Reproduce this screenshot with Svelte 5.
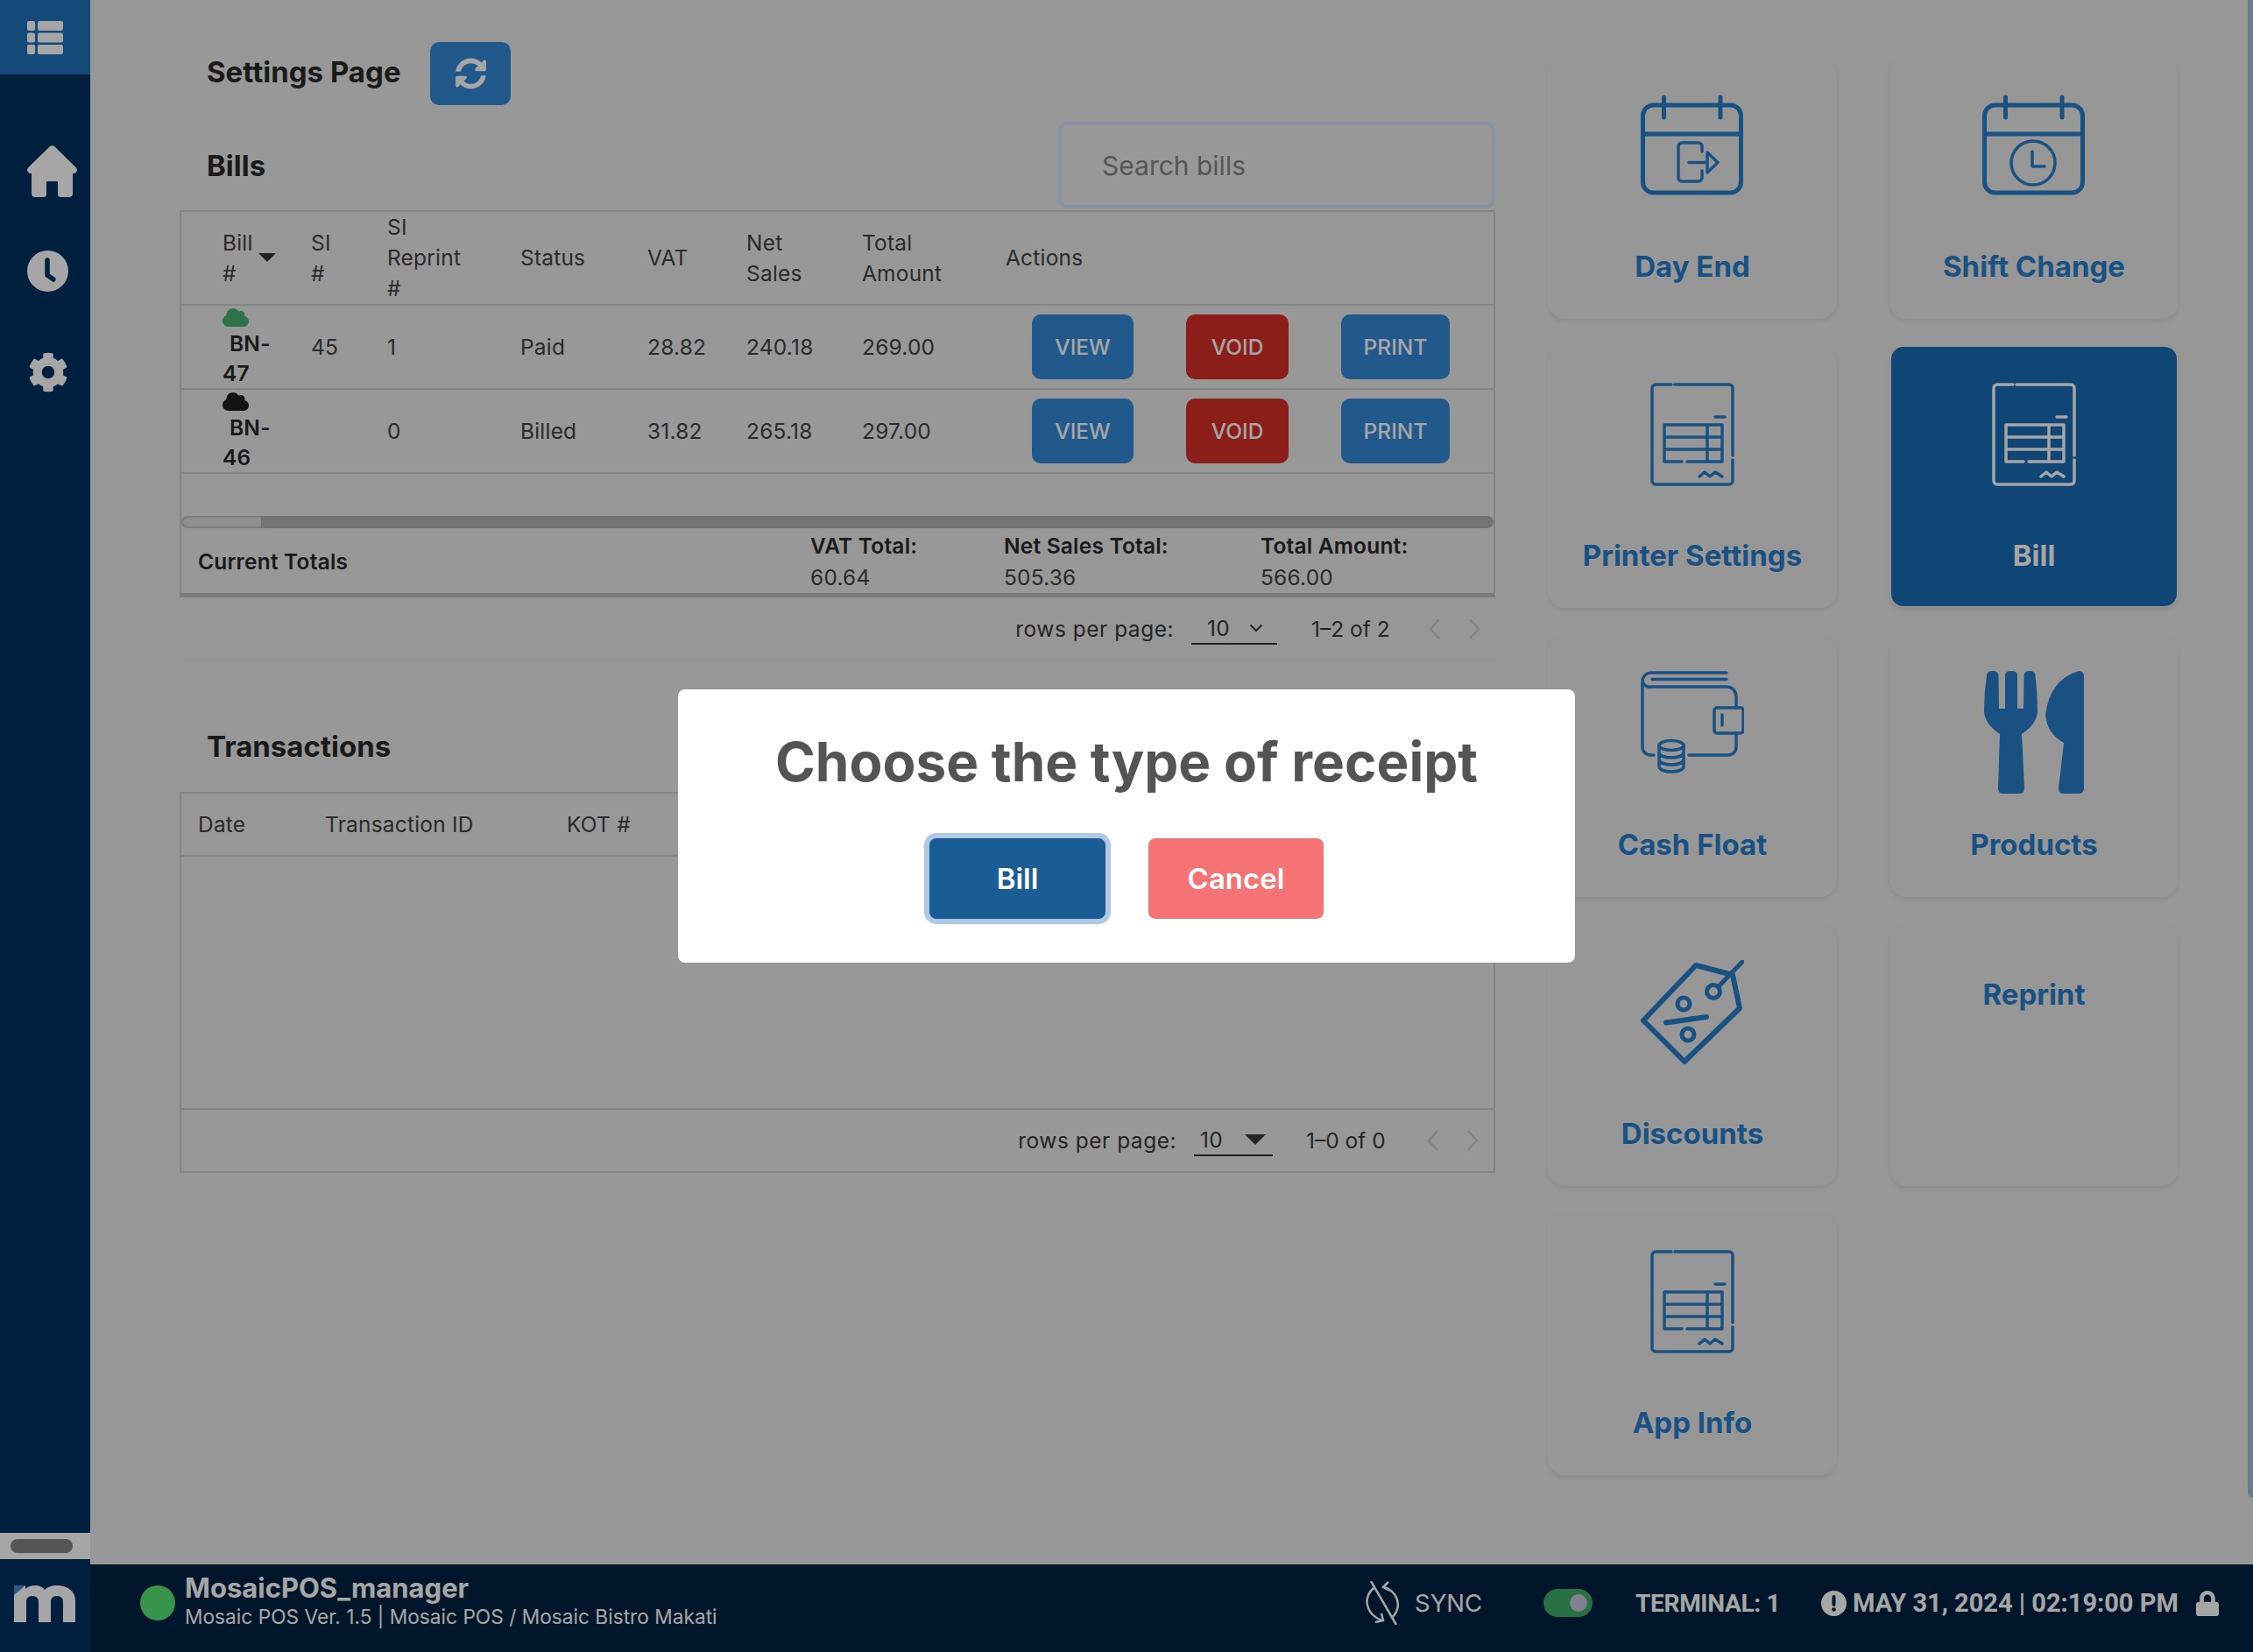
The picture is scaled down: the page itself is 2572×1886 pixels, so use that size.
<script>
  const bills = [
    { no: '47', si: '45', reprint: '1', status: 'Paid', vat: '28.82', net: '240.18', total: '269.00', synced: true },
    { no: '46', si: '', reprint: '0', status: 'Billed', vat: '31.82', net: '265.18', total: '297.00', synced: false }
  ]

  const tiles = [
    { label: 'Day End', icon: 'dayend' },
    { label: 'Shift Change', icon: 'shift' },
    { label: 'Printer Settings', icon: 'receipt' },
    { label: 'Bill', icon: 'receipt', active: true },
    { label: 'Cash Float', icon: 'wallet' },
    { label: 'Products', icon: 'cutlery' },
    { label: 'Discounts', icon: 'tag' },
    { label: 'Reprint' },
    { label: 'App Info', icon: 'receipt' }
  ]
</script>

{#snippet calendar()}
  <rect x="2.5" y="9" width="112" height="100" rx="12" />
  <path d="M2.5 42H114.5M26.500 0V23M91 0V23" />
{/snippet}

{#snippet chevrons()}
  <svg class="chev" viewBox="0 0 14 26"><path d="M12 2 2 13l10 11" /></svg>
  <svg class="chev next" viewBox="0 0 14 26"><path d="M2 2l10 11L2 24" /></svg>
{/snippet}

<div class="app">
  <aside class="sidebar">
    <div class="menu">
      <svg width="41" height="38" viewBox="0 0 41 38" fill="currentColor">
        <rect width="9" height="11" rx="2" /><rect x="12" width="29" height="11" rx="2" />
        <rect y="13.500" width="9" height="11" rx="2" /><rect x="12" y="13.500" width="29" height="11" rx="2" />
        <rect y="27" width="9" height="11" rx="2" /><rect x="12" y="27" width="29" height="11" rx="2" />
      </svg>
    </div>
    <nav class="nav">
      <svg class="home" width="59" height="59" viewBox="0 0 59 59" fill="currentColor">
        <path d="M26.500 1.500a4 4 0 0 1 6 0l24.500 24a4 4 0 0 1-3 6.500H53v23a4 4 0 0 1-4 4h-10a3 3 0 0 1-3-3V42a1 1 0 0 0-1-1H24a1 1 0 0 0-1 1v14a3 3 0 0 1-3 3H10a4 4 0 0 1-4-4V32H5a4 4 0 0 1-3-6.500z" />
      </svg>
      <svg class="clock" width="47" height="47" viewBox="0 0 47 47">
        <circle cx="23.500" cy="23.500" r="23.500" fill="currentColor" />
        <path d="M23 11v17l7 5" fill="none" stroke="#033161" stroke-width="5.500" stroke-linecap="round" stroke-linejoin="round" />
      </svg>
      <svg class="gear" width="46" height="46" viewBox="0 0 512 512" fill="currentColor">
        <path d="M487.4 315.700l-42.600-24.600c4.300-23.200 4.300-47 0-70.200l42.600-24.600c4.900-2.800 7.100-8.600 5.500-14-11.100-35.600-30-67.800-54.700-94.600-3.800-4.100-10-5.100-14.800-2.300L380.800 110c-17.900-15.400-38.500-27.300-60.800-35.100V25.800c0-5.600-3.900-10.500-9.400-11.700-36.700-8.200-74.300-7.800-109.200 0-5.500 1.200-9.400 6.100-9.400 11.700V75c-22.200 7.900-42.800 19.800-60.800 35.100L88.700 85.500c-4.900-2.800-11-1.900-14.800 2.300-24.700 26.700-43.600 58.900-54.700 94.600-1.700 5.400.6 11.200 5.500 14L67.300 221c-4.300 23.200-4.300 47 0 70.200l-42.600 24.600c-4.900 2.800-7.100 8.600-5.500 14 11.100 35.600 30 67.800 54.700 94.600 3.800 4.100 10 5.100 14.800 2.300l42.600-24.600c17.900 15.400 38.500 27.300 60.800 35.100v49.200c0 5.600 3.900 10.500 9.400 11.700 36.700 8.200 74.300 7.800 109.200 0 5.500-1.200 9.400-6.100 9.400-11.700v-49.200c22.200-7.900 42.800-19.800 60.800-35.100l42.600 24.600c4.900 2.800 11 1.900 14.800-2.300 24.700-26.700 43.600-58.900 54.700-94.600 1.500-5.500-.7-11.300-5.600-14.100zM256 336c-44.100 0-80-35.900-80-80s35.900-80 80-80 80 35.900 80 80-35.900 80-80 80z" />
      </svg>
    </nav>
    <div class="side-scroll"><span></span></div>
    <div class="logo">
      <svg width="70" height="42" viewBox="0 0 70 42">
        <path fill="#fff" d="M0 0H13V4C16 1 20 0 24 0 29 0 33 2 35 5 38 2 43 0 49 0 60 0 70 6 70 17V42H56V19C56 14 53 12 49 12 44 12 42 15 42 19V42H28V19C28 14 25 12 21 12 16 12 14 15 14 19V42H0Z" />
        <path fill="#3f8fd0" d="M0 0H13L0 11Z" />
      </svg>
    </div>
  </aside>

  <div class="right">
    <main class="content">
      <section class="left">
        <header class="page-head">
          <h1>Settings Page</h1>
          <button class="refresh" aria-label="refresh">
            <svg width="37" height="36" viewBox="0 0 512 512" fill="currentColor">
              <path d="M370.720 133.280C339.458 104.008 298.888 87.962 255.848 88c-77.458.068-144.328 53.178-162.791 126.850-1.344 5.363-6.122 9.150-11.651 9.150H24.103c-7.498 0-13.194-6.807-11.807-14.176C33.933 94.924 134.813 8 256 8c66.448 0 126.791 26.136 171.315 68.685L463.030 40.970C478.149 25.851 504 36.559 504 57.941V192c0 13.255-10.745 24-24 24H345.941c-21.382 0-32.090-25.851-16.971-40.971l41.750-41.749zM32 296h134.059c21.382 0 32.090 25.851 16.971 40.971l-41.750 41.750c31.262 29.273 71.835 45.319 114.876 45.280 77.418-.07 144.315-53.144 162.787-126.849 1.344-5.363 6.122-9.150 11.651-9.150h57.304c7.498 0 13.194 6.807 11.807 14.176C478.067 417.076 377.187 504 256 504c-66.448 0-126.791-26.136-171.315-68.685L48.970 471.030C33.851 486.149 8 475.441 8 454.059V320c0-13.255 10.745-24 24-24z" />
            </svg>
          </button>
        </header>

        <div class="bills-head">
          <h2>Bills</h2>
          <input class="search" placeholder="Search bills" />
        </div>

        <div class="bills">
          <table>
            <colgroup>
              <col style="width:148px" /><col style="width:87px" /><col style="width:152px" /><col style="width:145px" />
              <col style="width:113px" /><col style="width:132px" /><col style="width:164px" /><col />
            </colgroup>
            <thead>
              <tr>
                <th class="first">Bill<br />#<span class="sort"></span></th>
                <th>SI<br />#</th>
                <th>SI<br />Reprint<br />#</th>
                <th>Status</th>
                <th>VAT</th>
                <th>Net<br />Sales</th>
                <th>Total<br />Amount</th>
                <th>Actions</th>
              </tr>
            </thead>
            <tbody>
              {#each bills as bill}
                <tr>
                  <td class="first bill-no">
                    <svg class:synced={bill.synced} class="cloud" width="30" height="21" viewBox="0 0 640 448" fill="currentColor">
                      <path d="M537.600 194.600c4.100-10.700 6.400-22.400 6.400-34.600 0-53-43-96-96-96-19.700 0-38.100 6-53.300 16.200C367 32.200 315.300 0 256 0 167.600 0 96 71.600 96 160c0 2.700.1 5.400.2 8.100C40.200 187.800 0 241.200 0 304c0 79.500 64.500 144 144 144h368c70.700 0 128-57.300 128-128 0-61.900-44-113.600-102.400-125.400z" />
                    </svg>
                    <b><span class="indent">BN-</span><br />{bill.no}</b>
                  </td>
                  <td>{bill.si}</td>
                  <td>{bill.reprint}</td>
                  <td>{bill.status}</td>
                  <td>{bill.vat}</td>
                  <td>{bill.net}</td>
                  <td>{bill.total}</td>
                  <td>
                    <div class="actions">
                      <button class="view">VIEW</button>
                      <button class="void">VOID</button>
                      <button class="print">PRINT</button>
                    </div>
                  </td>
                </tr>
              {/each}
            </tbody>
          </table>
          <div class="spacer"></div>
          <div class="hscroll"><span></span></div>
          <div class="totals">
            <b class="totals-title">Current Totals</b>
            <div><b>VAT Total:</b><span>60.64</span></div>
            <div><b>Net Sales Total:</b><span>505.36</span></div>
            <div><b>Total Amount:</b><span>566.00</span></div>
          </div>
        </div>
        <div class="pager bills-pager">
          <span class="rows-label">rows per page:</span>
          <div class="rows">10<svg width="16" height="10" viewBox="0 0 16 10"><path d="M1.500 1.500 8 8l6.500-6.500" fill="none" stroke="currentColor" stroke-width="2" /></svg></div>
          <span class="count">1–2 of 2</span>
          {@render chevrons()}
        </div>

        <h2 class="tx-title">Transactions</h2>
        <div class="tx">
          <div class="tx-head">
            <span class="date">Date</span>
            <span class="txid">Transaction ID</span>
            <span>KOT #</span>
          </div>
          <div class="tx-body"></div>
          <div class="pager tx-pager">
            <span class="rows-label">rows per page:</span>
            <div class="rows">10<svg width="24" height="12" viewBox="0 0 24 12"><path d="M0 0h24L12 12z" fill="currentColor" /></svg></div>
            <span class="count">1–0 of 0</span>
            {@render chevrons()}
          </div>
        </div>
      </section>

      <section class="tiles">
        {#each tiles as tile}
          <div class="tile" class:active={tile.active}>
            {#if tile.icon}
              <svg class="tile-icon" width="118" height="140" viewBox="0 0 118 140">
                {#if tile.icon === 'dayend'}
                  <g transform="translate(0 5)" stroke-width="5">
                    {@render calendar()}
                    <path stroke-width="3.500" d="M70 62V56a4 4 0 0 0-4-4H47a4 4 0 0 0-4 4V92a4 4 0 0 0 4 4H66a4 4 0 0 0 4-4V84M55 74.500H76M76 63l12 11.500L76 86Z" />
                  </g>
                {:else if tile.icon === 'shift'}
                  <g transform="translate(0 5)" stroke-width="5">
                    {@render calendar()}
                    <circle cx="58" cy="75" r="25" stroke-width="3.500" />
                    <path stroke-width="3.500" d="M57 62V79H71" />
                  </g>
                {:else if tile.icon === 'receipt'}
                  <g transform="translate(0 1)" stroke-width="3.500">
                    <path d="M35 2H17a4 4 0 0 0-4 4V112a4 4 0 0 0 4 4H101a4 4 0 0 0 4-4V88M105 83V6a4 4 0 0 0-4-4H39" />
                    <path d="M85 39H96M47 90H27V48H93V90H53M27 62H93M27 76H93M76 48V90M67 107l6-5 6 5 6-5 8 5" />
                  </g>
                {:else if tile.icon === 'wallet'}
                  <g stroke-width="3.500">
                    <path d="M98 2H13a10 10 0 0 0-11 10V87a9 9 0 0 0 9 9H15M98 9.500H13M2 12a9 9 0 0 0 11 6H98a11 11 0 0 1 11 11V42M109 71V87a9 9 0 0 1-9 9H55" />
                    <rect x="84" y="42" width="33" height="29" rx="3" />
                    <path d="M93 50V62" />
                    <ellipse cx="35" cy="85" rx="14" ry="5.500" />
                    <path d="M21 85V109c0 8 28 8 28 0V85M21 93c0 8 28 8 28 0M21 101c0 8 28 8 28 0" />
                  </g>
                {:else if tile.icon === 'cutlery'}
                  <g transform="translate(2 0)" stroke="none" fill="currentColor">
                    <path d="M3 5Q3 0 10 0 16 0 16.500 5L17 43H24V5Q24 0 31 0 38 0 38 5V43H45L45.500 5Q46 0 52 0 58 0 58.500 5 61 25 61 45 61 60 43 72L46 134Q46 140 40 140H22Q16 140 16 134L18 72Q0 60 0 45 0 25 3 5Z" />
                    <path d="M114 6Q114 0 108 0 75 10 70 50 72 72 91 82L85 134Q85 140 91 140H108Q114 140 114 134Z" />
                  </g>
                {:else if tile.icon === 'tag'}
                  <g transform="translate(1 2)" stroke-width="6">
                    <path d="M62 4 104 15 112 53 49 114 2 67Z" />
                    <circle cx="82" cy="34" r="7.500" stroke-width="5" />
                    <path stroke-width="5" d="M88 28 115 0" />
                    <circle cx="48" cy="48" r="7" stroke-width="5" />
                    <path d="M28 69.500 74 63" />
                    <circle cx="53" cy="83" r="7" stroke-width="5" />
                  </g>
                {/if}
              </svg>
            {/if}
            <span class="tile-label" class:solo={!tile.icon}>{tile.label}</span>
          </div>
        {/each}
      </section>
    </main>

    <footer class="status">
      <div class="dot"></div>
      <div class="who">
        <strong>MosaicPOS_manager</strong>
        <span>Mosaic POS Ver. 1.5 | Mosaic POS / Mosaic Bistro Makati</span>
      </div>
      <div class="status-right">
        <svg class="sync-ico" width="41" height="50" viewBox="0 0 41 50" fill="none" stroke="currentColor" stroke-width="2.500">
          <path d="M8 0 37 50M22 7C36 9 46 28 32 42M28 1 22 7 30 11M11 8C0 18 0 36 20 45M13 47 22 45 20 37" />
        </svg>
        <span class="sync">SYNC</span>
        <div class="toggle"><span></span></div>
        <span class="terminal">TERMINAL: 1</span>
        <svg class="alert" width="29" height="29" viewBox="0 0 29 29">
          <circle cx="14.500" cy="14.500" r="14.500" fill="currentColor" />
          <path d="M14.500 7V16" stroke="#032242" stroke-width="4" stroke-linecap="round" />
          <circle cx="14.500" cy="21.500" r="2.300" fill="#032242" />
        </svg>
        <span class="clockline">MAY 31, 2024 | 02:19:00 PM</span>
        <svg class="lock" width="26" height="29" viewBox="0 0 448 512" fill="currentColor" preserveAspectRatio="none">
          <path d="M400 224h-24v-72C376 68.200 307.800 0 224 0S72 68.200 72 152v72H48c-26.500 0-48 21.500-48 48v192c0 26.500 21.500 48 48 48h352c26.500 0 48-21.500 48-48V272c0-26.500-21.500-48-48-48zm-104 0H152v-72c0-39.700 32.300-72 72-72s72 32.300 72 72v72z" />
        </svg>
      </div>
    </footer>
  </div>

  <div class="page-scroll"></div>

  <div class="backdrop">
    <div class="modal">
      <h3>Choose the type of receipt</h3>
      <div class="modal-btns">
        <button class="confirm">Bill</button>
        <button class="cancel">Cancel</button>
      </div>
    </div>
  </div>
</div>

<style>
  :global(body) {
    margin: 0;
    background: #eaeaea;
  }

  .app {
    position: relative;
    display: flex;
    width: 2572px;
    height: 1886px;
    overflow: hidden;
    font-family: Inter, "Noto Sans", sans-serif;
    font-size: 24.500px;
    letter-spacing: 0.2px;
    color: #424242;
    background: #eaeaea;
  }

  /* sidebar */
  .sidebar {
    display: flex;
    flex-direction: column;
    flex: none;
    width: 103px;
    background: #033161;
    color: #fff;
  }

  .menu {
    display: flex;
    align-items: center;
    justify-content: center;
    height: 85px;
    background: #2072bc;
  }

  .nav {
    flex: 1;
    display: flex;
    flex-direction: column;
    align-items: flex-start;
    padding: 81px 0 0 30px;
  }

  .clock {
    margin: 61px 0 0 1px;
  }

  .gear {
    margin: 69px 0 0 2px;
  }

  .side-scroll {
    flex: none;
    height: 30px;
    display: flex;
    align-items: center;
    padding-left: 12px;
    background: #fff;
  }

  .side-scroll span {
    width: 71px;
    height: 16px;
    border-radius: 8px;
    background: #838383;
  }

  .logo {
    flex: none;
    height: 106px;
    padding: 30px 0 0 16px;
    box-sizing: border-box;
  }

  /* main area */
  .right {
    flex: 1;
    display: flex;
    flex-direction: column;
    min-width: 0;
  }

  .content {
    flex: 1;
    display: flex;
    align-items: flex-start;
    padding-left: 102px;
  }

  .left {
    flex: none;
    width: 1502px;
    padding-top: 48px;
  }

  h1, h2 {
    margin: 0;
    font-size: 33px;
    font-weight: 700;
    color: #292929;
    letter-spacing: 0;
  }

  .page-head {
    display: flex;
    align-items: center;
    height: 72px;
    padding-left: 31px;
  }

  .page-head h1 {
    width: 255px;
    margin-top: -4px;
  }

  .refresh {
    display: flex;
    align-items: center;
    justify-content: center;
    width: 92px;
    height: 72px;
    padding: 0;
    border: 0;
    border-radius: 10px;
    background: #3489d7;
    color: #fff;
  }

  .bills-head {
    display: flex;
    align-items: center;
    justify-content: space-between;
    height: 99px;
    margin-top: 19px;
    padding-left: 31px;
  }

  .search {
    width: 499px;
    height: 99px;
    box-sizing: border-box;
    padding: 0 0 0 46px;
    border: 4px solid #cfe2f7;
    border-radius: 10px;
    background: transparent;
    font: inherit;
    font-size: 30px;
  }

  .search::placeholder {
    color: #848484;
    opacity: 1;
  }

  .bills {
    margin-top: 2px;
    border: 2px solid #cdcdcd;
    border-bottom: 5px solid #bdbdbd;
  }

  table {
    width: 100%;
    table-layout: fixed;
    border-collapse: collapse;
  }

  th, td {
    padding: 0;
    text-align: left;
    font-weight: 400;
    line-height: 35px;
  }

  thead tr {
    height: 102px;
  }

  tbody tr {
    height: 96px;
  }

  thead tr, tbody tr {
    border-bottom: 2px solid #cdcdcd;
  }

  .first {
    padding-left: 47px;
    position: relative;
  }

  .sort {
    position: absolute;
    top: 47px;
    left: 88px;
    border: 10px solid transparent;
    border-top: 10px solid #333;
    border-bottom: 0;
  }

  .bill-no {
    vertical-align: top;
    padding-top: 3px;
    line-height: 34px;
  }

  .cloud {
    display: block;
    margin-bottom: 2px;
    color: #1d1d1d;
  }

  .cloud.synced {
    color: #47b06f;
  }

  .bill-no b {
    display: block;
    font-weight: 600;
    color: #292929;
  }

  .indent {
    margin-left: 8px;
  }

  .actions {
    display: flex;
    gap: 60px;
    padding-left: 30px;
  }

  .actions button {
    height: 74px;
    padding: 0;
    border: 0;
    border-radius: 10px;
    color: #fff;
    font: inherit;
    font-weight: 500;
  }

  .view {
    width: 116px;
    background: #3489d7;
  }

  .void {
    width: 117px;
    background: #d72e28;
  }

  .print {
    width: 124px;
    background: #3489d7;
  }

  .spacer {
    height: 48px;
  }

  .hscroll {
    height: 14px;
    border-radius: 7px;
    background: #b1b1b1;
    margin-bottom: 2px;
  }

  .hscroll span {
    display: block;
    box-sizing: border-box;
    width: 91px;
    height: 14px;
    border: 2px solid #c2c2c2;
    border-right: 0;
    border-radius: 7px 0 0 7px;
    background: #dadada;
  }

  .totals {
    display: grid;
    grid-template-columns: 699px 221px 293px 1fr;
    align-items: center;
    height: 72px;
    padding-left: 19px;
  }

  .totals div {
    display: flex;
    flex-direction: column;
    line-height: 36px;
  }

  .totals b {
    font-weight: 600;
    color: #292929;
  }

  .totals-title {
    font-weight: 700;
  }

  .pager {
    display: flex;
    align-items: center;
    justify-content: flex-end;
    color: #3a3a3a;
  }

  .rows-label {
    letter-spacing: 0.5px;
  }

  .bills-pager {
    height: 72px;
    padding-right: 17px;
    background: #e8e8e8;
    box-shadow: 0 1px 2px rgba(0, 0, 0, 0.03);
  }

  .rows {
    display: flex;
    align-items: center;
    justify-content: space-between;
    width: 98px;
    height: 36px;
    box-sizing: border-box;
    padding: 0 16px 0 18px;
    margin: 0 39px 0 20px;
    border-bottom: 2px solid #333;
  }

  .count {
    width: 134px;
    letter-spacing: 0;
  }

  .chev {
    width: 14px;
    height: 26px;
    fill: none;
    stroke: #cdcdcd;
    stroke-width: 2.500;
  }

  .next {
    margin-left: 31px;
  }

  .tx-title {
    margin: 74px 0 0;
    padding-left: 31px;
    line-height: 48px;
  }

  .tx {
    margin-top: 28px;
    border: 2px solid #cdcdcd;
  }

  .tx-head {
    display: flex;
    align-items: center;
    height: 70px;
    padding-left: 19px;
    border-bottom: 2px solid #cdcdcd;
  }

  .date {
    width: 145px;
  }

  .txid {
    width: 276px;
  }

  .tx-body {
    height: 287px;
    border-bottom: 2px solid #cdcdcd;
  }

  .tx-pager {
    height: 70px;
    padding-right: 17px;
  }

  .tx-pager .rows {
    width: 90px;
    padding: 0 8px 0 7px;
    margin: 0 38px 0 20px;
  }

  .tx-pager .count {
    width: 138px;
  }

  .tiles {
    display: grid;
    grid-template-columns: 330px 330px;
    grid-auto-rows: 300px;
    gap: 30px 60px;
    margin: 64px 0 0 60px;
  }

  .tile {
    display: flex;
    flex-direction: column;
    align-items: center;
    box-sizing: border-box;
    padding-top: 40px;
    border: 2px solid transparent;
    border-radius: 20px;
    background: #e8e8e8;
    box-shadow: 0 3px 6px rgba(0, 0, 0, 0.08);
    color: #287dca;
  }

  .tile.active {
    background-color: #1a6cb4;
    background-clip: padding-box;
    border-radius: 16px;
    color: #fff;
  }

  .tile-icon {
    flex: none;
    fill: none;
    stroke: currentColor;
    stroke-linejoin: round;
    stroke-linecap: round;
  }

  .tile-label {
    margin-top: 34px;
    font-size: 33px;
    line-height: 48px;
    font-weight: 700;
    letter-spacing: 0;
  }

  .tile-label.solo {
    margin-top: 15px;
  }

  /* bottom bar */
  .status {
    flex: none;
    display: flex;
    align-items: center;
    height: 100px;
    padding: 0 39px 12px 57px;
    box-sizing: border-box;
    background: #032242;
    color: #fff;
  }

  .dot {
    width: 40px;
    height: 40px;
    border-radius: 50%;
    background: #56e472;
  }

  .who {
    display: flex;
    flex-direction: column;
    margin: -6px 0 0 11px;
  }

  .who strong {
    font-size: 31px;
    line-height: 38px;
    font-weight: 700;
    letter-spacing: 0;
  }

  .who span {
    font-size: 22.700px;
    line-height: 28px;
    font-weight: 400;
    letter-spacing: 0;
  }

  .status-right {
    display: flex;
    align-items: center;
    margin-left: auto;
    font-size: 28px;
  }

  .sync {
    margin-left: 17px;
    width: 74px;
    font-size: 27.500px;
    letter-spacing: 0;
  }

  .toggle {
    display: flex;
    align-items: center;
    justify-content: flex-end;
    width: 56px;
    height: 32px;
    margin-left: 73px;
    padding-right: 6px;
    box-sizing: border-box;
    border-radius: 16px;
    background: #41ac6c;
  }

  .toggle span {
    width: 20px;
    height: 20px;
    border-radius: 50%;
    background: #c3cadc;
  }

  .terminal, .clockline {
    font-family: Roboto, Inter, sans-serif;
    font-weight: 700;
    white-space: nowrap;
    letter-spacing: 0;
  }

  .terminal {
    width: 163px;
    margin-left: 49px;
    letter-spacing: -0.3px;
  }

  .alert {
    margin-left: 49px;
  }

  .clockline {
    width: 371px;
    margin-left: 7px;
    font-size: 29px;
  }

  .lock {
    margin-left: 21px;
  }

  .page-scroll {
    position: absolute;
    top: 0;
    right: 0;
    width: 6px;
    height: 1710px;
    border-radius: 0 0 0 6px;
    background: #a3bcd1;
  }

  /* receipt dialog */
  .backdrop {
    position: absolute;
    inset: 0;
    display: flex;
    align-items: center;
    justify-content: center;
    background: rgba(0, 0, 0, 0.35);
  }

  .modal {
    width: 1024px;
    height: 312px;
    box-sizing: border-box;
    padding-top: 38px;
    border-radius: 8px;
    background: #fff;
    text-align: center;
  }

  .modal h3 {
    margin: 0 0 42px;
    font-size: 62px;
    line-height: 90px;
    font-weight: 700;
    letter-spacing: 0;
    color: #545454;
  }

  .modal-btns {
    display: flex;
    justify-content: center;
    gap: 49px;
  }

  .modal-btns button {
    width: 201px;
    height: 92px;
    padding: 0;
    border: 0;
    border-radius: 8px;
    color: #fff;
    font: inherit;
    font-size: 33px;
    font-weight: 600;
  }

  .modal-btns .cancel {
    width: 200px;
    background: #f67375;
  }

  .confirm {
    background: #1a5c96;
    box-shadow: 0 0 0 6px #b0c8e6;
  }
</style>
